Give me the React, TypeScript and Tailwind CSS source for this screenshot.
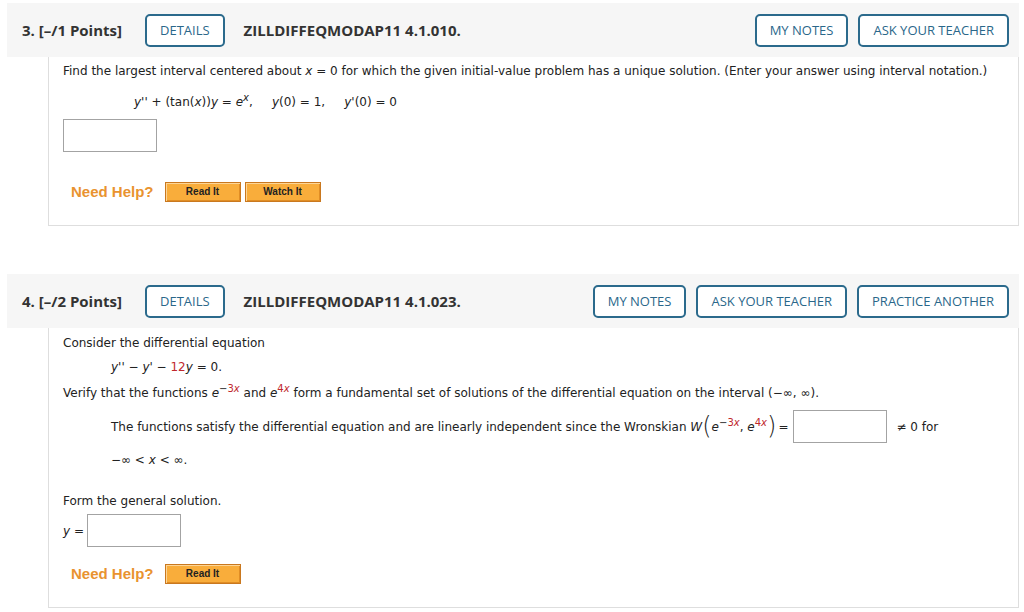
import React from "react";

const hdrFont = { fontFamily: '"Open Sans", "DejaVu Sans", sans-serif' };

const OutlineButton = ({ label }: { label: string }) => (
  <button className="h-[33px] px-[13px] border-2 border-[#2b6a8c] rounded-[5px] text-[13px] text-[#2a678a] bg-white leading-none whitespace-nowrap">
    {label}
  </button>
);

const HelpButton = ({ label }: { label: string }) => (
  <button
    className="h-[20px] w-[76px] border border-[#c9781f] bg-[#f9ad3b] shadow-[inset_1px_1px_0_#fdd596,inset_-1px_-1px_0_#e08d25] text-[10px] font-bold text-[#222] leading-none"
    style={{ fontFamily: '"Liberation Sans", Arial, sans-serif' }}
  >
    {label}
  </button>
);

const NeedHelp = ({ watch }: { watch?: boolean }) => (
  <div className="flex items-center ml-[8px] h-[20px]">
    <span
      className="text-[15px] font-bold text-[#e9932f] mr-[11px]"
      style={{ fontFamily: '"Liberation Sans", Arial, sans-serif' }}
    >
      Need Help?
    </span>
    <HelpButton label="Read It" />
    {watch && (
      <span className="ml-[4px]">
        <HelpButton label="Watch It" />
      </span>
    )}
  </div>
);

const Header = ({
  num,
  pts,
  code,
  buttons,
}: {
  num: string;
  pts: string;
  code: string;
  buttons: string[];
}) => (
  <div
    className="h-[54px] bg-[#f6f6f6] flex items-center pl-[15px] pr-[10px] text-[#333]"
    style={hdrFont}
  >
    <span className="text-[15px] font-bold w-[123px]">
      {num} [–/{pts} Points]
    </span>
    <OutlineButton label="DETAILS" />
    <span className="text-[15px] font-bold ml-[19px]">{code}</span>
    <div className="ml-auto flex gap-[10px]">
      {buttons.map((b) => (
        <OutlineButton key={b} label={b} />
      ))}
    </div>
  </div>
);

const Input = () => (
  <div className="h-[33px] w-[94px] border border-[#a3a3a3] bg-white" />
);

const I = ({ children }: { children: React.ReactNode }) => (
  <i className="italic">{children}</i>
);

const Red = ({ children }: { children: React.ReactNode }) => (
  <span className="text-[#c0282d]">{children}</span>
);

export default function App() {
  return (
    <div
      className="w-[1024px] h-[612px] bg-white pt-[3px] pl-[7px] pr-[5px] overflow-hidden text-[12px] text-[#222]"
      style={{ fontFamily: '"DejaVu Sans", Verdana, sans-serif' }}
    >
      {/* Question 3 */}
      <Header
        num="3."
        pts="1"
        code="ZILLDIFFEQMODAP11 4.1.010."
        buttons={["MY NOTES", "ASK YOUR TEACHER"]}
      />
      <div className="ml-[41px] border border-t-0 border-[#dedede] pl-[14px] pt-[6px] pb-[23px]">
        <p className="leading-[16px]">
          Find the largest interval centered about <I>x</I> = 0 for which the
          given initial-value problem has a unique solution. (Enter your answer
          using interval notation.)
        </p>
        <p className="leading-[16px] mt-[15px] ml-[71px] whitespace-pre">
          <I>y</I>'' + (tan(<I>x</I>))<I>y</I> = <I>e</I>
          <sup className="text-[10px]">
            <I>x</I>
          </sup>
          ,{"     "}
          <I>y</I>(0) = 1,{"     "}
          <I>y</I>'(0) = 0
        </p>
        <div className="mt-[9px]">
          <Input />
        </div>
        <div className="mt-[30px]">
          <NeedHelp watch />
        </div>
      </div>

      <div className="h-[48px]" />

      {/* Question 4 */}
      <Header
        num="4."
        pts="2"
        code="ZILLDIFFEQMODAP11 4.1.023."
        buttons={["MY NOTES", "ASK YOUR TEACHER", "PRACTICE ANOTHER"]}
      />
      <div className="ml-[41px] border border-t-0 border-[#dedede] pl-[14px] pt-[7px] pb-[23px]">
        <p className="leading-[16px]">Consider the differential equation</p>
        <p className="leading-[16px] mt-[8px] ml-[48px]">
          <I>y</I>'' − <I>y</I>' − <Red>12</Red>
          <I>y</I> = 0.
        </p>
        <p className="leading-[16px] mt-[10px]">
          Verify that the functions <I>e</I>
          <sup className="text-[10px]">
            −<Red>3<I>x</I></Red>
          </sup>{" "}
          and <I>e</I>
          <sup className="text-[10px]">
            <Red>4<I>x</I></Red>
          </sup>{" "}
          form a fundamental set of solutions of the differential equation on
          the interval (−∞, ∞).
        </p>
        <div className="mt-[9px] ml-[48px] flex items-center h-[33px]">
          <span className="whitespace-pre">
            The functions satisfy the differential equation and are linearly
            independent since the Wronskian <I>W</I>
          </span>
          <span className="text-[24px] font-light leading-none -mt-[2px]">(</span>
          <span className="whitespace-pre">
            <I>e</I>
            <sup className="text-[10px]">
              −<Red>3<I>x</I></Red>
            </sup>
            , <I>e</I>
            <sup className="text-[10px]">
              <Red>4<I>x</I></Red>
            </sup>
          </span>
          <span className="text-[24px] font-light leading-none -mt-[2px]">)</span>
          <span className="ml-[2px] mr-[5px]">=</span>
          <Input />
          <span className="ml-[9px]">≠ 0 for</span>
        </div>
        <p className="leading-[16px] mt-[9px] ml-[48px]">
          −∞ &lt; <I>x</I> &lt; ∞.
        </p>
        <p className="leading-[16px] mt-[25px]">Form the general solution.</p>
        <div className="mt-[5px] flex items-center">
          <span className="mr-[3px]">
            <I>y</I> =
          </span>
          <Input />
        </div>
        <div className="mt-[17px]">
          <NeedHelp />
        </div>
      </div>
    </div>
  );
}
